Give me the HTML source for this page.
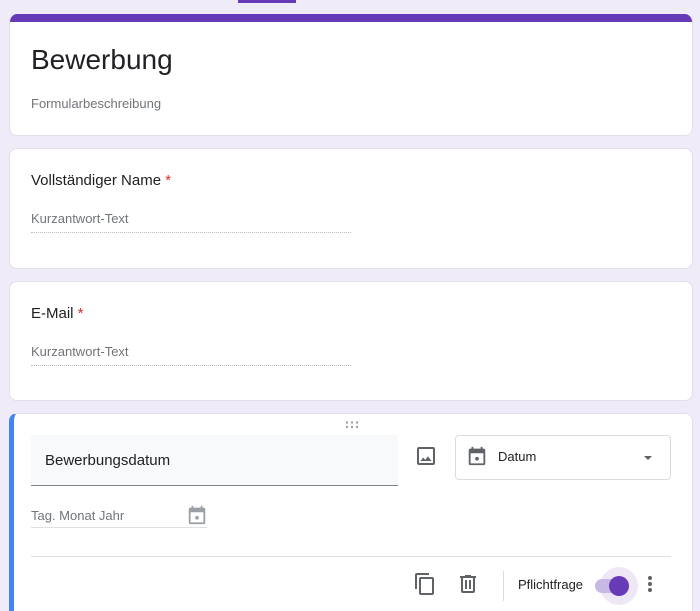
<!DOCTYPE html>
<html style="width:700px;height:611px;overflow:hidden"><head><meta charset="utf-8"><style>
*{box-sizing:border-box;margin:0;padding:0}
body{width:700px;height:611px;background:#f0ebf8;font-family:"Liberation Sans",Arial,sans-serif;position:relative;overflow:hidden;color:#202124}
.card{position:absolute;left:9px;width:684px;background:#fff;border:1px solid #e3dfea;border-radius:8px}
.a{position:absolute}
.t{font-size:15px;color:#202124}
.ph{font-size:13px;color:#70757a}
.star{color:#d93025}
.dash{position:absolute;left:21px;width:320px;border-bottom:1px dotted #bdbdbd}
</style></head><body>
<div class="a" style="left:238px;top:0;width:58px;height:3px;background:#673ab7"></div>
<div class="card" style="top:14px;height:122px;border-top:none;overflow:hidden">
  <div class="a" style="left:-1px;top:0;width:686px;height:8px;background:#673ab7"></div>
  <div class="a" style="left:21px;top:30px;font-size:28px;color:#202124">Bewerbung</div>
  <div class="a ph" style="left:21px;top:82px">Formularbeschreibung</div>
</div>
<div class="card" style="top:148px;height:121px">
  <div class="a t" style="left:21px;top:23px">Vollständiger Name <span class="star">*</span></div>
  <div class="a ph" style="left:21px;top:62px">Kurzantwort-Text</div>
  <div class="dash" style="top:83px"></div>
</div>
<div class="card" style="top:281px;height:120px">
  <div class="a t" style="left:21px;top:23px">E-Mail <span class="star">*</span></div>
  <div class="a ph" style="left:21px;top:62px">Kurzantwort-Text</div>
  <div class="dash" style="top:83px"></div>
</div>
<div class="card" style="top:413px;height:210px;border-left:5px solid #4285f4;overflow:hidden">
  <svg class="a" style="left:331px;top:7px" width="14" height="8" viewBox="0 0 14 8"><g fill="#9aa0a6"><circle cx="2" cy="1.5" r="1.2"/><circle cx="7" cy="1.5" r="1.2"/><circle cx="12" cy="1.5" r="1.2"/><circle cx="2" cy="6" r="1.2"/><circle cx="7" cy="6" r="1.2"/><circle cx="12" cy="6" r="1.2"/></g></svg>
  <div class="a" style="left:17px;top:21px;width:367px;height:51px;background:#f8f9fa;border-bottom:1px solid #80868b"></div>
  <div class="a t" style="left:31px;top:38px;font-size:15px">Bewerbungsdatum</div>
  <svg class="a" style="left:400px;top:30px" width="24" height="24" viewBox="0 0 24 24"><path fill="#5f6368" d="M19 3H5a2 2 0 0 0-2 2v14a2 2 0 0 0 2 2h14a2 2 0 0 0 2-2V5a2 2 0 0 0-2-2zm0 16H5V5h14zM13.96 12.29l-2.75 3.54-1.96-2.36L6.5 17h11z"/></svg>
  <div class="a" style="left:441px;top:21px;width:216px;height:45px;border:1px solid #dadce0;border-radius:4px"></div>
  <svg class="a" style="left:452px;top:31px" width="22" height="22" viewBox="0 0 24 24"><path fill="#5f6368" d="M19 4h-1V2h-2v2H8V2H6v2H5a2 2 0 0 0-2 2v14a2 2 0 0 0 2 2h14a2 2 0 0 0 2-2V6a2 2 0 0 0-2-2zm0 16H5V9h14zM12 13a2 2 0 1 0 0 4 2 2 0 0 0 0-4z"/></svg>
  <div class="a" style="left:484px;top:35px;font-size:13px;color:#202124">Datum</div>
  <div class="a" style="left:630px;top:42px;width:0;height:0;border-left:4px solid transparent;border-right:4px solid transparent;border-top:4px solid #5f6368"></div>
  <div class="a ph" style="left:17px;top:94px">Tag. Monat Jahr</div>
  <svg class="a" style="left:172px;top:90px" width="22" height="22" viewBox="0 0 24 24"><path fill="#9aa0a6" d="M19 4h-1V2h-2v2H8V2H6v2H5a2 2 0 0 0-2 2v14a2 2 0 0 0 2 2h14a2 2 0 0 0 2-2V6a2 2 0 0 0-2-2zm0 16H5V9h14zM12 13a2 2 0 1 0 0 4 2 2 0 0 0 0-4z"/></svg>
  <div class="a" style="left:17px;top:113px;width:176px;border-bottom:1px solid #e0e0e0"></div>
  <div class="a" style="left:17px;top:142px;width:640px;border-bottom:1px solid #e0e0e0"></div>
  <svg class="a" style="left:399px;top:158px" width="24" height="24" viewBox="0 0 24 24"><path fill="#5f6368" d="M16 1H4a2 2 0 0 0-2 2v14h2V3h12zm3 4H8a2 2 0 0 0-2 2v14a2 2 0 0 0 2 2h11a2 2 0 0 0 2-2V7a2 2 0 0 0-2-2zm0 16H8V7h11z"/></svg>
  <svg class="a" style="left:442px;top:158px" width="24" height="24" viewBox="0 0 24 24"><path fill="#5f6368" d="M15 4V3H9v1H4v2h1v13a2 2 0 0 0 2 2h10a2 2 0 0 0 2-2V6h1V4zm2 15H7V6h10zM9 8h2v9H9zm4 0h2v9h-2z"/></svg>
  <div class="a" style="left:489px;top:157px;width:1px;height:30px;background:#dadce0"></div>
  <div class="a" style="left:504px;top:163px;font-size:13px;color:#202124">Pflichtfrage</div>
  <div class="a" style="left:586px;top:153px;width:38px;height:38px;border-radius:50%;background:#ede7f6"></div>
  <div class="a" style="left:581px;top:165px;width:34px;height:14px;border-radius:7px;background:#c8b8e6"></div>
  <div class="a" style="left:595px;top:162px;width:20px;height:20px;border-radius:50%;background:#673ab7"></div>
  <div class="a" style="left:634px;top:162px;width:4px;line-height:6px;font-size:0">
    <div style="width:4px;height:4px;border-radius:2px;background:#5f6368;margin-bottom:2px"></div>
    <div style="width:4px;height:4px;border-radius:2px;background:#5f6368;margin-bottom:2px"></div>
    <div style="width:4px;height:4px;border-radius:2px;background:#5f6368"></div>
  </div>
</div>
</body></html>
